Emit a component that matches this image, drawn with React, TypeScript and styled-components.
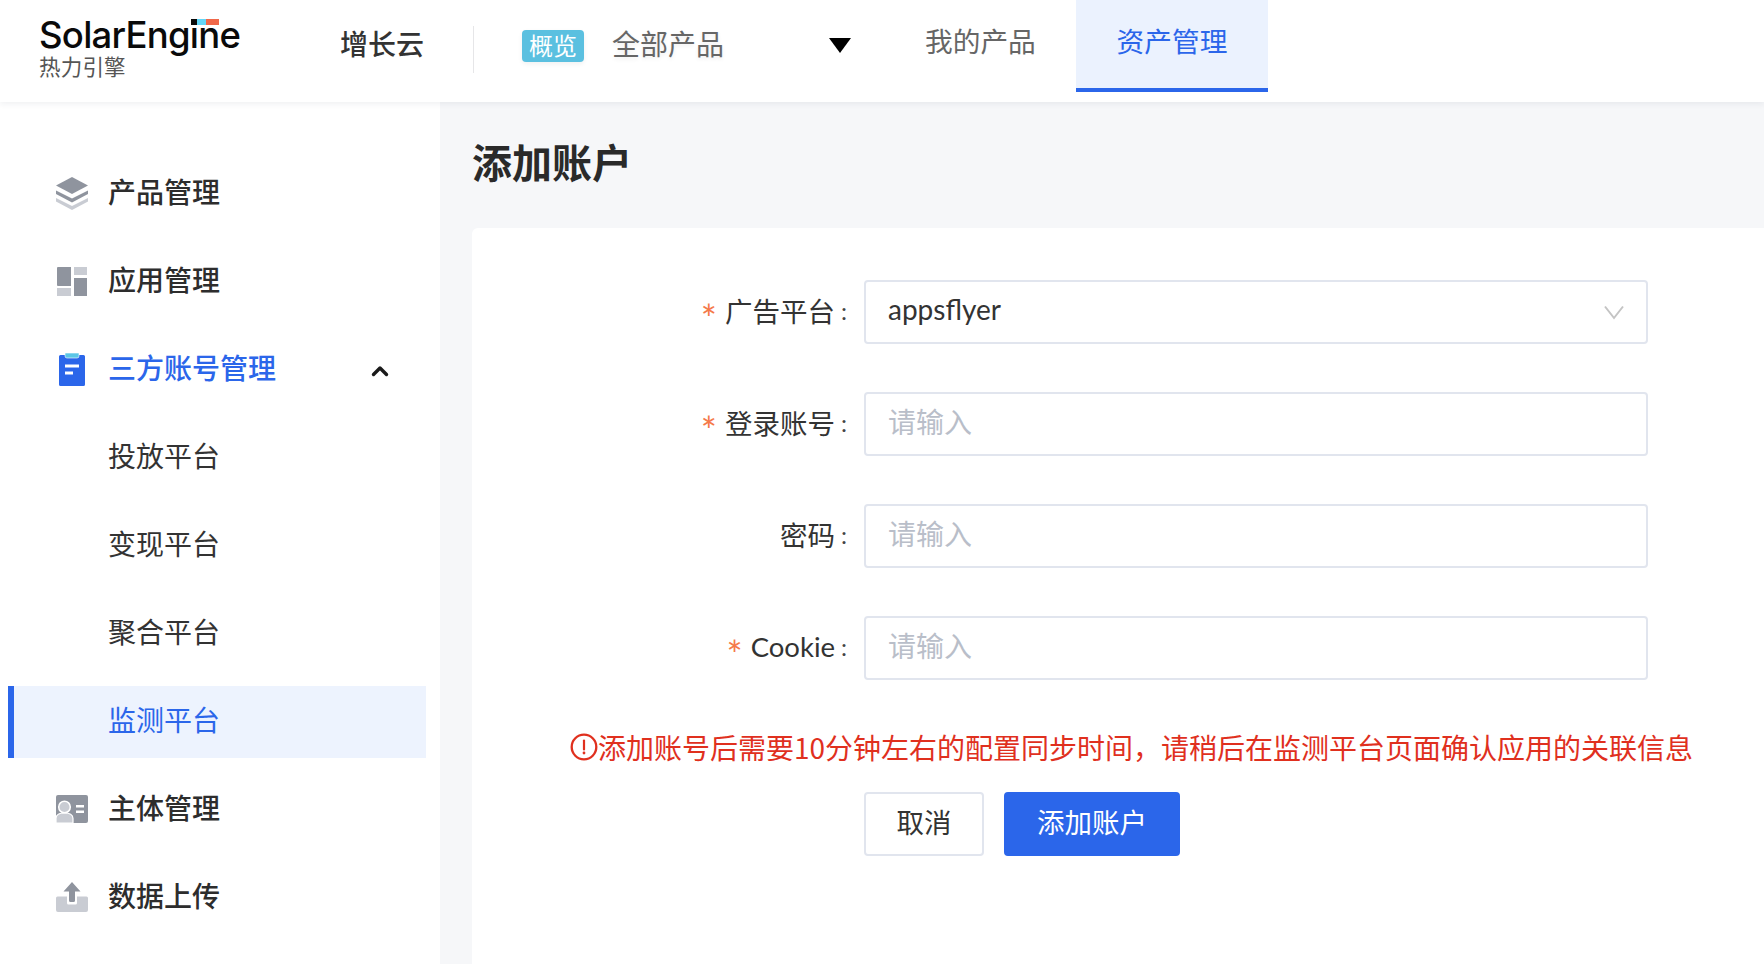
import React from "react";
import styled, { createGlobalStyle } from "styled-components";

const CJK = `"Noto Sans CJK SC", "Noto Sans", sans-serif`;
const BLUE = "#2b66ea";
const RED = "#e0301e";

const Global = createGlobalStyle`
  html, body { margin: 0; padding: 0; height: 964px; overflow: hidden; background: #fff; }
  * { box-sizing: border-box; }
  body { font-family: "Lato", ${CJK}; }
`;

const Page = styled.div`
  width: 1764px;
  height: 964px;
  display: flex;
  flex-direction: column;
  overflow: hidden;
`;

const Header = styled.header`
  position: relative;
  z-index: 2;
  height: 102px;
  flex: none;
  display: flex;
  align-items: flex-start;
  background: #fff;
  padding-left: 39px;
  box-shadow: 0 2px 6px rgba(30, 40, 70, 0.07);
`;

const Logo = styled.div`
  width: 201px;
  margin-top: 14px;
  flex: none;
  display: flex;
  flex-direction: column;
`;

const LogoWord = styled.div`
  position: relative;
  font-family: "Inter", sans-serif;
  font-weight: 500;
  font-size: 36.5px;
  line-height: 42px;
  letter-spacing: -0.75px;
  color: #0a0a0a;
  white-space: nowrap;
`;

const LogoStripe = styled.svg`
  position: absolute;
  left: 152px;
  top: 5px;
`;

const LogoSub = styled.div`
  font-family: ${CJK};
  font-size: 21.5px;
  line-height: 20px;
  letter-spacing: 0.2px;
  color: #555;
`;

const Cloud = styled.div`
  margin-left: 100px;
  margin-top: 23px;
  width: 84px;
  flex: none;
  font-family: ${CJK};
  font-weight: 500;
  font-size: 28px;
  line-height: 40px;
  color: #333;
  white-space: nowrap;
`;

const Divider = styled.div`
  margin-left: 49px;
  margin-top: 26px;
  width: 1px;
  height: 47px;
  flex: none;
  background: #e6e6e8;
`;

const Badge = styled.div`
  margin-left: 48px;
  margin-top: 30px;
  width: 62px;
  height: 32px;
  flex: none;
  border-radius: 4px;
  background: #5bc0e0;
  color: #fff;
  font-family: ${CJK};
  font-size: 24px;
  line-height: 30px;
  text-align: center;
  box-shadow: 0 2px 5px rgba(0, 0, 0, 0.06);
`;

const Product = styled.div`
  margin-left: 28px;
  margin-top: 23px;
  width: 217px;
  flex: none;
  font-family: ${CJK};
  font-size: 28px;
  line-height: 40px;
  color: #666;
  text-shadow: 0 2px 4px rgba(0, 0, 0, 0.08);
`;

const Caret = styled.svg`
  margin-top: 38px;
  flex: none;
`;

const Tab = styled.div<{ $active?: boolean }>`
  height: 92px;
  flex: none;
  font-family: ${CJK};
  font-size: 27.7px;
  line-height: 81px;
  width: ${(p) => (p.$active ? "192px" : "151px")};
  margin-left: ${(p) => (p.$active ? "0" : "74px")};
  color: ${(p) => (p.$active ? BLUE : "#666")};
  background: ${(p) => (p.$active ? "#ebf2fe" : "transparent")};
  border-bottom: 4px solid ${(p) => (p.$active ? BLUE : "transparent")};
  text-align: ${(p) => (p.$active ? "center" : "left")};
`;

const Body = styled.div`
  flex: 1;
  display: flex;
  min-height: 0;
`;

const Sidebar = styled.nav`
  width: 440px;
  flex: none;
  background: #fff;
  padding: 56px 14px 0 8px;
  display: flex;
  flex-direction: column;
  gap: 16px;
`;

const MenuItem = styled.div<{ $active?: boolean; $open?: boolean; $sub?: boolean }>`
  height: 72px;
  flex: none;
  display: flex;
  align-items: center;
  padding-left: ${(p) => (p.$sub ? "100px" : "48px")};
  padding-bottom: 6px;
  font-family: ${CJK};
  font-size: 28px;
  font-weight: ${(p) => (p.$sub ? 400 : 500)};
  color: ${(p) => (p.$active || p.$open ? BLUE : p.$sub ? "#333" : "#2d2d2d")};
  background: ${(p) => (p.$active ? "#edf3fe" : "transparent")};
  box-shadow: ${(p) => (p.$active ? `inset 6px 0 0 ${BLUE}` : "none")};
`;

const IconSlot = styled.span`
  width: 32px;
  height: 36px;
  flex: none;
  margin-right: 20px;
  margin-top: 4px;
  display: flex;
  align-items: center;
  justify-content: center;
`;

const ChevronUp = styled.svg`
  margin-left: 95px;
  margin-top: 8px;
`;

const Main = styled.main`
  flex: 1;
  min-width: 0;
  background: #f6f7f9;
  padding-left: 32px;
  display: flex;
  flex-direction: column;
`;

const Title = styled.h1`
  margin: 31px 0 39px;
  height: 56px;
  font-family: ${CJK};
  font-size: 40px;
  line-height: 56px;
  font-weight: 700;
  color: #2a2a2a;
  flex: none;
`;

const Card = styled.section`
  flex: 1;
  background: #fff;
  border-top-left-radius: 6px;
  padding-top: 52px;
  display: flex;
  flex-direction: column;
`;

const FieldRow = styled.div`
  display: flex;
  align-items: center;
  height: 64px;
  margin-bottom: 48px;
  flex: none;
`;

const Label = styled.div`
  width: 392px;
  flex: none;
  padding: 0 17px 4px 0;
  display: flex;
  align-items: center;
  justify-content: flex-end;
  font-family: "Lato", ${CJK};
  font-size: 27.5px;
  color: #333;
`;

const Star = styled.span`
  color: #f5794a;
  font-family: "Lato", sans-serif;
  font-size: 38px;
  margin-right: 8px;
  height: 20px;
  line-height: 36px;
`;

const Colon = styled.span`
  margin-left: 6px;
  width: 6px;
  text-align: center;
  color: #444;
  font-size: 24px;
`;

const Control = styled.div`
  width: 784px;
  height: 64px;
  flex: none;
  border: 2px solid #e1e5ee;
  border-radius: 4px;
  background: #fff;
  padding: 0 22px 6px;
  display: flex;
  align-items: center;
  justify-content: space-between;
  font-family: "Lato", ${CJK};
  font-size: 28px;
  color: #333;
`;

const Caretline = styled.svg`
  margin-top: 6px;
`;

const Placeholder = styled.span`
  font-family: ${CJK};
  font-size: 28px;
  color: #b9bec9;
`;

const Notice = styled.div`
  margin-top: -1px;
  margin-left: 98px;
  height: 40px;
  flex: none;
  display: flex;
  align-items: center;
  color: ${RED};
  font-family: ${CJK};
  font-size: 28px;
  white-space: nowrap;
`;

const Actions = styled.div`
  margin-top: 25px;
  margin-left: 392px;
  display: flex;
  gap: 20px;
  flex: none;
`;

const Btn = styled.button<{ $primary?: boolean }>`
  height: 64px;
  width: ${(p) => (p.$primary ? "176px" : "120px")};
  padding: 0 0 7px;
  border-radius: 4px;
  font-family: ${CJK};
  font-size: 27.5px;
  border: 2px solid ${(p) => (p.$primary ? BLUE : "#e1e5ee")};
  background: ${(p) => (p.$primary ? BLUE : "#fff")};
  color: ${(p) => (p.$primary ? "#fff" : "#333")};
`;

const Layers = () => (
  <svg width="32" height="33" viewBox="0 0 32 33">
    <path d="M16 0 32 8.5 16 17 0 8.5Z" fill="#8f949e" />
    <path d="M0 13.5 16 21.5 32 13.5V17L16 25.5 0 17Z" fill="#8f949e" />
    <path d="M0 21 16 29 32 21V24.5L16 33 0 24.5Z" fill="#c9ccd3" />
  </svg>
);

const Apps = () => (
  <svg width="30" height="29" viewBox="0 0 30 29">
    <path d="M1 0H14V19H1a1 1 0 0 1-1-1V1a1 1 0 0 1 1-1Z" fill="#8f949e" />
    <rect x="17" y="0" width="13" height="8" fill="#c9ccd3" />
    <rect x="17" y="11" width="13" height="18" fill="#8f949e" />
    <rect x="0" y="21" width="14" height="8" fill="#c9ccd3" />
  </svg>
);

const Clip = () => (
  <svg width="26" height="33" viewBox="0 0 26 33">
    <path d="M1.5 2H24.500A1.500 1.500 0 0 1 26 3.500V31.500A1.500 1.500 0 0 1 24.500 33H1.500A1.500 1.500 0 0 1 0 31.500V3.500A1.500 1.500 0 0 1 1.500 2Z" fill={BLUE} />
    <path d="M6 0H20V3A2 2 0 0 1 18 5H8A2 2 0 0 1 6 3Z" fill="#5bc6e6" stroke="#fff" strokeWidth="0.6" />
    <rect x="6" y="11.500" width="14" height="3" fill="#fff" />
    <rect x="6" y="18.500" width="8" height="3" fill="#fff" />
  </svg>
);

const Person = () => (
  <svg width="32" height="28" viewBox="0 0 32 28">
    <path d="M2 0H30a2 2 0 0 1 2 2V26a2 2 0 0 1-2 2H2a2 2 0 0 1-2-2V2a2 2 0 0 1 2-2Z" fill="#8f949e" />
    <path d="M0 28V23.500C0 19.500 3.500 18 8.500 18S17 19.500 17 23.500V28Z" fill="#c9ccd3" stroke="#fff" strokeWidth="1.200" />
    <circle cx="8.500" cy="12" r="5.800" fill="#c9ccd3" stroke="#fff" strokeWidth="1.500" />
    <rect x="20" y="10" width="8" height="2.500" fill="#fff" />
    <rect x="20" y="15.500" width="8" height="2.500" fill="#fff" />
  </svg>
);

const Upload = () => (
  <svg width="32" height="30" viewBox="0 0 32 30">
    <path d="M0 16A1.500 1.500 0 0 1 1.500 14.500H11V21A1.500 1.500 0 0 0 12.500 22.500H19.500A1.500 1.500 0 0 0 21 21V14.500H30.500A1.500 1.500 0 0 1 32 16V28A2 2 0 0 1 30 30H2A2 2 0 0 1 0 28Z" fill="#c9ccd3" />
    <path d="M16 0 24.500 9.500H19V18.500A1.500 1.500 0 0 1 17.500 20H14.500A1.500 1.500 0 0 1 13 18.500V9.500H7.500Z" fill="#8f949e" />
  </svg>
);

const Alert = () => (
  <svg width="28" height="28" viewBox="0 0 28 28" style={{ flex: "none" }}>
    <circle cx="14" cy="14" r="12.300" fill="none" stroke={RED} strokeWidth="2.300" />
    <path d="M14 7.500V16.500" stroke={RED} strokeWidth="2.200" strokeLinecap="round" />
    <circle cx="14" cy="20" r="1.400" fill={RED} />
  </svg>
);

const fields = [
  { label: "广告平台", required: true, value: "appsflyer", select: true },
  { label: "登录账号", required: true },
  { label: "密码" },
  { label: "Cookie", required: true },
];

export default function App() {
  return (
    <Page>
      <Global />
      <Header>
        <Logo>
          <LogoWord>
            SolarEngine
            <LogoStripe width="28" height="6" viewBox="0 0 28 6">
              <rect width="6" height="6" fill="#0a0a0a" />
              <rect x="6" width="9" height="6" fill="#62d6f7" />
              <rect x="15" width="13" height="6" fill="#f0684a" />
            </LogoStripe>
          </LogoWord>
          <LogoSub>热力引擎</LogoSub>
        </Logo>
        <Cloud>增长云</Cloud>
        <Divider />
        <Badge>概览</Badge>
        <Product>全部产品</Product>
        <Caret width="22" height="15" viewBox="0 0 22 15">
          <path d="M0 0H22L11 15Z" fill="#000" />
        </Caret>
        <Tab>我的产品</Tab>
        <Tab $active>资产管理</Tab>
      </Header>
      <Body>
        <Sidebar>
          <MenuItem><IconSlot><Layers /></IconSlot>产品管理</MenuItem>
          <MenuItem><IconSlot><Apps /></IconSlot>应用管理</MenuItem>
          <MenuItem $open>
            <IconSlot><Clip /></IconSlot>三方账号管理
            <ChevronUp width="18" height="12" viewBox="0 0 18 12">
              <path d="M2.500 9.500 9 3l6.500 6.500" fill="none" stroke="#1a1a1a" strokeWidth="3.400" strokeLinecap="round" strokeLinejoin="round" />
            </ChevronUp>
          </MenuItem>
          <MenuItem $sub>投放平台</MenuItem>
          <MenuItem $sub>变现平台</MenuItem>
          <MenuItem $sub>聚合平台</MenuItem>
          <MenuItem $sub $active>监测平台</MenuItem>
          <MenuItem><IconSlot><Person /></IconSlot>主体管理</MenuItem>
          <MenuItem><IconSlot><Upload /></IconSlot>数据上传</MenuItem>
        </Sidebar>
        <Main>
          <Title>添加账户</Title>
          <Card>
            {fields.map((f) => (
              <FieldRow key={f.label}>
                <Label>
                  {f.required && <Star>*</Star>}
                  {f.label}
                  <Colon>:</Colon>
                </Label>
                <Control>
                  {f.value ? f.value : <Placeholder>请输入</Placeholder>}
                  {f.select && (
                    <Caretline width="20" height="15" viewBox="0 0 20 15">
                      <path d="M1 1.500 10 13 19 1.500" fill="none" stroke="#c4c4c4" strokeWidth="2" />
                    </Caretline>
                  )}
                </Control>
              </FieldRow>
            ))}
            <Notice>
              <Alert />
              添加账号后需要10分钟左右的配置同步时间，请稍后在监测平台页面确认应用的关联信息
            </Notice>
            <Actions>
              <Btn>取消</Btn>
              <Btn $primary>添加账户</Btn>
            </Actions>
          </Card>
        </Main>
      </Body>
    </Page>
  );
}
